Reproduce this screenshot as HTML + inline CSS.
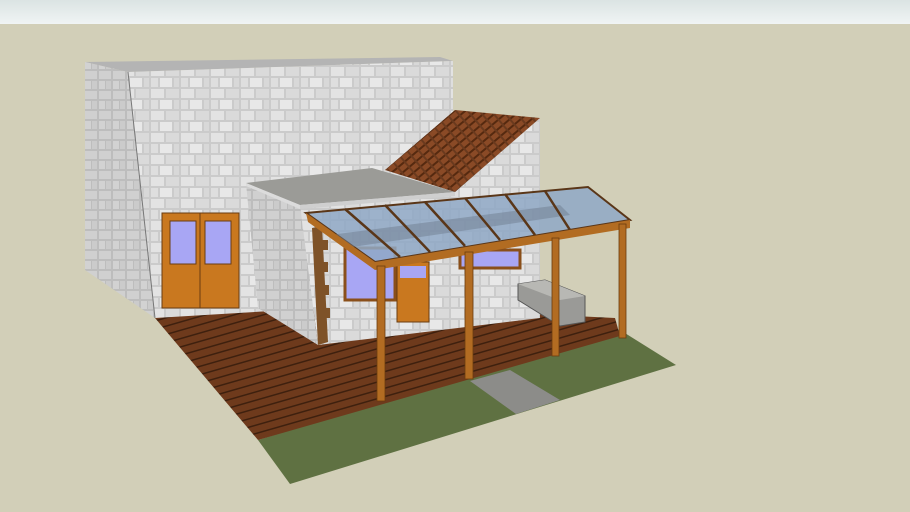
<!DOCTYPE html>
<html><head><meta charset="utf-8"><style>
html,body{margin:0;padding:0;width:910px;height:512px;overflow:hidden;background:#d2cfb8}
svg{display:block}
</style></head><body>
<svg width="910" height="512" viewBox="0 0 910 512" xmlns="http://www.w3.org/2000/svg">
<defs>
<linearGradient id="sky" x1="0" y1="0" x2="0" y2="1"><stop offset="0" stop-color="#dbe4e3"/><stop offset="1" stop-color="#f0f4f4"/></linearGradient>
<pattern id="stone" width="30" height="22" patternUnits="userSpaceOnUse">
<rect width="30" height="22" fill="#cbcbcb"/>
<rect x="1" y="1" width="13" height="9" fill="#e3e3e3"/><rect x="16" y="1" width="13" height="9" fill="#dadada"/>
<rect x="1" y="12" width="7" height="9" fill="#dedede"/><rect x="10" y="12" width="12" height="9" fill="#e8e8e8"/><rect x="24" y="12" width="5" height="9" fill="#d8d8d8"/>
</pattern>
<pattern id="stoneS" width="14" height="20" patternUnits="userSpaceOnUse">
<rect width="14" height="20" fill="#bdbdbd"/>
<rect x="1" y="1" width="6" height="8" fill="#d2d2d2"/><rect x="8" y="1" width="5" height="8" fill="#cbcbcb"/>
<rect x="1" y="11" width="12" height="8" fill="#d0d0d0"/>
</pattern>
<pattern id="deck" width="10" height="8" patternUnits="userSpaceOnUse" patternTransform="rotate(-16)">
<rect width="10" height="8" fill="#6e3a1c"/><rect y="6.5" width="10" height="1.5" fill="#3e200e"/>
</pattern>
<pattern id="tile" width="9" height="7" patternUnits="userSpaceOnUse" patternTransform="rotate(-40)">
<rect width="9" height="7" fill="#8a4a26"/><rect y="5" width="9" height="2" fill="#55290f"/><rect x="7" width="2" height="7" fill="#6a3a1e"/>
</pattern>
</defs>
<rect width="910" height="24" fill="url(#sky)"/>
<rect y="24" width="910" height="488" fill="#d2cfb8"/>
<polygon points="258,440 290,484 676,365 620,330" fill="#5f7142"/>
<polygon points="470,381 510,370 560,400 516,414" fill="#8c8c89"/>
<polygon points="155,318 250,300 615,318 620,336 258,440" fill="url(#deck)"/>
<polygon points="85,62 440,57 453,61 128,72" fill="#b4b4b4"/>
<polygon points="85,62 128,72 155,318 85,270" fill="url(#stoneS)"/>
<polygon points="128,72 453,61 453,300 155,318" fill="url(#stone)"/>
<line x1="128" y1="72" x2="155" y2="318" stroke="#777" stroke-width="1"/>
<rect x="162" y="213" width="77" height="95" fill="#c9781f" stroke="#6a3d10"/>
<line x1="200" y1="213" x2="200" y2="308" stroke="#6a3d10"/>
<rect x="170" y="221" width="26" height="43" fill="#a8a6f4" stroke="#6a3d10"/>
<rect x="205" y="221" width="26" height="43" fill="#a8a6f4" stroke="#6a3d10"/>
<polygon points="455,120 540,118 540,318 455,320" fill="url(#stone)"/>
<polygon points="300,205 455,190 540,185 540,318 318,345" fill="url(#stone)"/>
<polygon points="385,170 455,110 540,118 455,192" fill="url(#tile)"/>
<polygon points="246,183 300,205 318,345 258,308" fill="url(#stoneS)"/>
<polygon points="246,183 372,168 455,192 300,205" fill="#9b9b97"/>
<polygon points="246,183 300,205 300,209 246,186" fill="#dcdcdc"/>
<polygon points="300,205 455,192 455,196 300,209" fill="#cfcfcf"/>
<polygon points="312,228 322,226 328,342 318,345" fill="#7e5228"/>
<g fill="#7e5228"><rect x="320" y="240" width="8" height="10"/><rect x="320" y="262" width="8" height="10"/><rect x="321" y="285" width="8" height="10"/><rect x="322" y="308" width="8" height="10"/></g>
<rect x="345" y="248" width="50" height="52" fill="#a8a6f4" stroke="#8a4f1a" stroke-width="3"/>
<rect x="397" y="262" width="32" height="60" fill="#c9781f" stroke="#6a3d10"/>
<rect x="400" y="266" width="26" height="12" fill="#a8a6f4"/>
<rect x="460" y="250" width="60" height="18" fill="#a8a6f4" stroke="#8a4f1a" stroke-width="3"/>
<polygon points="518,284 545,280 585,296 585,322 560,326 518,300" fill="#9a9a97" stroke="#555"/>
<polygon points="518,284 545,280 585,296 560,300" fill="#b8b8b4"/>
<polygon points="306,213 588,187 630,220 375,262" fill="#8fa8c6" fill-opacity="0.85" stroke="#5a3618" stroke-width="2"/>
<polygon points="330,235 560,205 570,215 345,248" fill="#6f7d90" fill-opacity="0.5"/>
<g stroke="#5a3618" stroke-width="2.5">
<line x1="345" y1="209" x2="400" y2="257"/><line x1="385" y1="205" x2="430" y2="252"/>
<line x1="425" y1="202" x2="465" y2="246"/><line x1="465" y1="198" x2="500" y2="240"/>
<line x1="505" y1="194" x2="535" y2="235"/><line x1="545" y1="191" x2="570" y2="230"/>
</g>
<polygon points="375,262 630,220 630,228 375,270" fill="#b26c22"/>
<polygon points="306,213 375,262 375,270 308,222" fill="#b26c22"/>
<rect x="377" y="266" width="8" height="135" fill="#b26c22" stroke="#6a3d10" stroke-width="0.8"/>
<rect x="465" y="252" width="8" height="127" fill="#b26c22" stroke="#6a3d10" stroke-width="0.8"/>
<rect x="552" y="238" width="7" height="118" fill="#b26c22" stroke="#6a3d10" stroke-width="0.8"/>
<rect x="619" y="224" width="7" height="114" fill="#b26c22" stroke="#6a3d10" stroke-width="0.8"/>
</svg>
</body></html>
